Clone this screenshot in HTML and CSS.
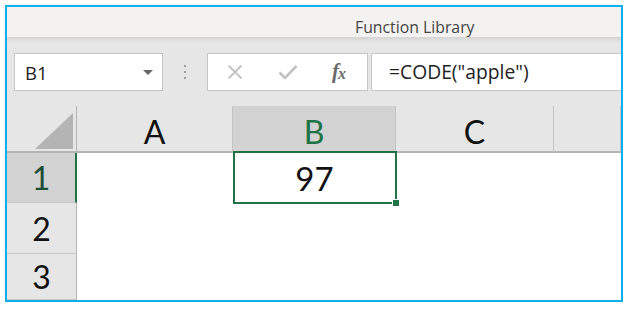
FILE: index.html
```html
<!DOCTYPE html>
<html lang="en">
<head>
  <meta charset="UTF-8" />
  <title>CODE function</title>
  <link rel="stylesheet" href="styles.css">
</head>
<body>
  <div class="frame">
    <div class="ribbon">
      <span class="group-label">Function Library</span>
    </div>

    <div class="formula-bar">
      <div class="name-box">
        <span>B1</span>
        <svg class="drop" width="10" height="5" viewBox="0 0 10 5"><polygon points="0,0 10,0 5,5" fill="#666"/></svg>
      </div>
      <div class="grip"><i></i><i></i><i></i></div>
      <div class="fx-buttons">
        <svg class="btn-cancel" width="16" height="16" viewBox="0 0 16 16">
          <path d="M1.5 1.5 L14.5 14.5 M14.5 1.5 L1.5 14.5" stroke="#c2c2c2" stroke-width="1.8" fill="none"/>
        </svg>
        <svg class="btn-enter" width="20" height="16" viewBox="0 0 20 16">
          <path d="M1.5 8.5 L7 14 L18.5 2" stroke="#c2c2c2" stroke-width="2.6" fill="none"/>
        </svg>
        <span class="btn-fx">f<sub>x</sub></span>
      </div>
      <div class="formula-input">=CODE("apple")</div>
    </div>

    <div class="sheet">
      <div class="corner">
        <svg width="38" height="36" viewBox="0 0 38 36"><polygon points="38,0 38,36 0,36" fill="#b4b4b4"/></svg>
      </div>
      <div class="col-head">A</div>
      <div class="col-head active">B</div>
      <div class="col-head">C</div>
      <div class="col-head"></div>

      <div class="row-head active">1</div>
      <div class="cell"></div>
      <div class="cell selected">97</div>
      <div class="cell"></div>
      <div class="cell"></div>

      <div class="row-head">2</div>
      <div class="cell"></div>
      <div class="cell"></div>
      <div class="cell"></div>
      <div class="cell"></div>

      <div class="row-head">3</div>
      <div class="cell"></div>
      <div class="cell"></div>
      <div class="cell"></div>
      <div class="cell"></div>
    </div>
  </div>
</body>
</html>
```

FILE: styles.css
```css
body {
  margin: 0;
  background: #fff;
  font-family: 'Open Sans', sans-serif;
}

.frame {
  margin: 5px;
  width: 614px;
  height: 293px;
  border: 2px solid #10aeea;
  display: flex;
  flex-direction: column;
  overflow: hidden;
}

/* ribbon strip */
.ribbon {
  height: 30px;
  background: #f3f2f1;
  padding-left: 348px;
  box-sizing: border-box;
  padding-top: 9px;
}

.group-label {
  font-size: 15.8px;
  line-height: 18px;
  color: #444;
}

/* formula bar */
.formula-bar {
  height: 69px;
  box-sizing: border-box;
  padding: 16px 0 0 7px;
  background: linear-gradient(#d3d3d3, #e6e6e6 5px);
  display: flex;
  align-items: flex-start;
}

.name-box {
  width: 149px;
  height: 38px;
  box-sizing: border-box;
  background: #fff;
  border: 1px solid #c6c6c6;
  display: flex;
  align-items: center;
  justify-content: space-between;
  padding: 0 9px 0 10px;
  font-size: 18.5px;
  color: #222;
}

.grip {
  width: 44px;
  height: 38px;
  display: flex;
  flex-direction: column;
  align-items: center;
  justify-content: center;
  gap: 4px;
}

.grip i {
  width: 2px;
  height: 2px;
  background: #a0a0a0;
}

.fx-buttons {
  width: 161px;
  height: 38px;
  box-sizing: border-box;
  background: #fff;
  border: 1px solid #c6c6c6;
  display: flex;
  align-items: center;
  padding-left: 19px;
}

.btn-enter {
  margin-left: 35px;
}

.btn-fx {
  margin-left: 34px;
  font-family: 'Liberation Serif', serif;
  font-style: italic;
  font-weight: bold;
  font-size: 21px;
  color: #6a6a6a;
  letter-spacing: -1px;
  line-height: 20px;
}

.btn-fx sub {
  font-size: 16px;
  vertical-align: -1px;
}

.formula-input {
  flex: 1;
  height: 38px;
  box-sizing: border-box;
  margin-left: 3px;
  background: #fff;
  border: 1px solid #c6c6c6;
  border-right: none;
  padding-left: 17px;
  font-size: 19.3px;
  line-height: 36px;
  color: #222;
}

/* worksheet grid */
.sheet {
  flex: 1;
  display: grid;
  grid-template-columns: 70px 156px 163px 158px 1fr;
  grid-template-rows: 47px 50px 51px 1fr;
  background: #fff;
  font-family: 'Lato', sans-serif;
}

.corner {
  background: #e6e6e6;
  border-right: 1px solid #b4b4b4;
  border-bottom: 2px solid #b4b4b4;
  padding: 7px 0 0 28px;
}

.corner svg {
  display: block;
}

.col-head {
  background: #e6e6e6;
  border-bottom: 2px solid #b4b4b4;
  border-right: 1px solid #c4c4c4;
  display: flex;
  align-items: center;
  justify-content: center;
  font-size: 32px;
  color: #111;
  padding-top: 5px;
}

.col-head.active {
  background: #d2d2d2;
  color: #217346;
}

.row-head {
  background: #e6e6e6;
  border-right: 1px solid #b4b4b4;
  border-bottom: 1px solid #c8c8c8;
  display: flex;
  align-items: center;
  justify-content: center;
  font-size: 32px;
  color: #111;
}

.row-head.active {
  background: #d2d2d2;
  color: #1f4e36;
  border-right: 2px solid #217346;
}

.cell {
  display: flex;
  align-items: center;
  justify-content: center;
  font-size: 33px;
  color: #111;
}

.cell.selected {
  position: relative;
}

.cell.selected::before {
  content: "";
  position: absolute;
  top: -2px;
  left: 0;
  right: -1px;
  bottom: -1px;
  border: 2px solid #217346;
}

.cell.selected::after {
  content: "";
  position: absolute;
  right: -4px;
  bottom: -4px;
  width: 6px;
  height: 6px;
  background: #217346;
  border: 1px solid #fff;
}
```
